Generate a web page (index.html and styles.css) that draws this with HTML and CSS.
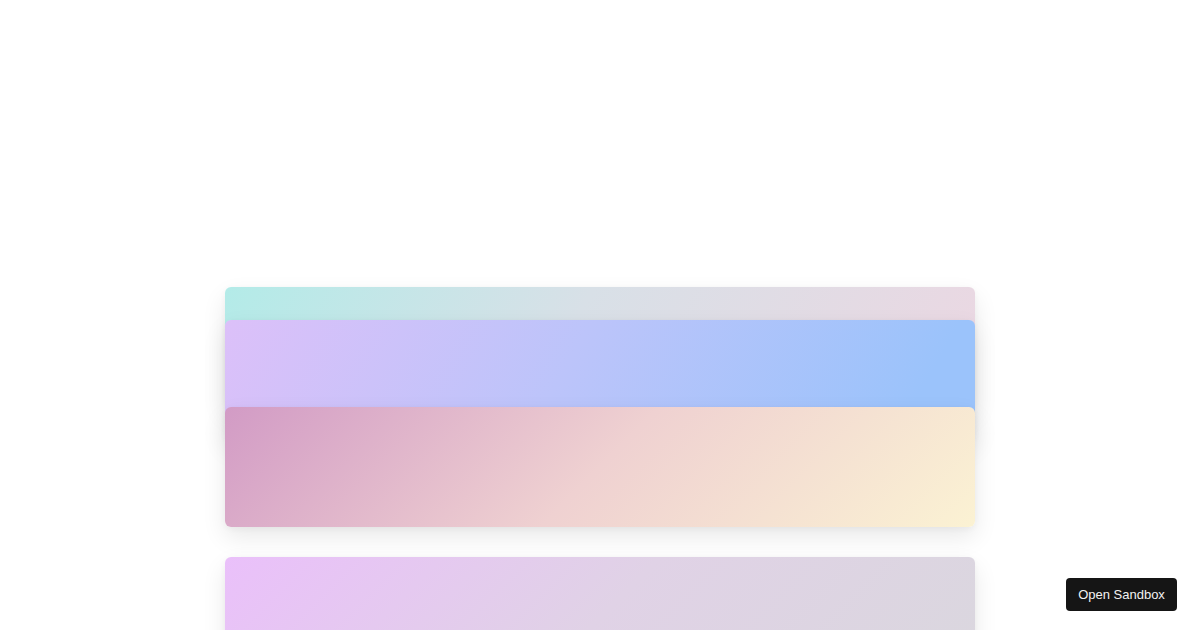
FILE: index.html
```html
<!DOCTYPE html>
<html>
<head>
<meta charset="utf-8">
<link rel="stylesheet" href="styles.css">
</head>
<body>
<main class="stage">
  <section class="stack">
    <div class="card card-teal"></div>
    <div class="card card-blue"></div>
    <div class="card card-peach"></div>
  </section>
  <div class="card card-lilac"></div>
</main>
<button class="sandbox">Open Sandbox</button>
</body>
</html>
```
FILE: styles.css
```css
html, body {
  margin: 0;
  padding: 0;
  height: 630px;
  background: #ffffff;
  overflow: hidden;
  font-family: "Liberation Sans", Arial, sans-serif;
}
.stage {
  width: 750px;
  margin: 0 auto;
  padding-top: 287px;
  box-sizing: border-box;
  display: flex;
  flex-direction: column;
}
.stack {
  display: flex;
  flex-direction: column;
}
.card {
  flex: none;
  height: 120px;
  border-radius: 6px;
  box-shadow: 0 10px 24px rgba(0, 0, 0, 0.09), 0 2px 6px rgba(0, 0, 0, 0.04);
  position: relative;
}
.card-teal {
  background: linear-gradient(120deg, #b3ebe8 0%, #d8e0e7 45%, #ecd7e2 100%);
}
.card-blue {
  margin-top: -87px;
  background: linear-gradient(120deg, #dcc0f9 0%, #bcc4fa 45%, #9bc3fb 90%);
}
.card-peach {
  margin-top: -33px;
  background: linear-gradient(135deg, #d29bc5 0%, #efd1d1 50%, #fbf2d3 100%);
}
.card-lilac {
  margin-top: 30px;
  background: linear-gradient(135deg, #eac0fa 0%, #e0d2e6 50%, #dad7de 100%);
}
.sandbox {
  position: fixed;
  right: 23px;
  bottom: 19px;
  width: 111px;
  height: 33px;
  padding: 0;
  border: none;
  border-radius: 4px;
  background: #151515;
  color: #f2f2f2;
  font-family: "Liberation Sans", Arial, sans-serif;
  font-size: 13px;
  line-height: 33px;
  text-align: center;
}
```
